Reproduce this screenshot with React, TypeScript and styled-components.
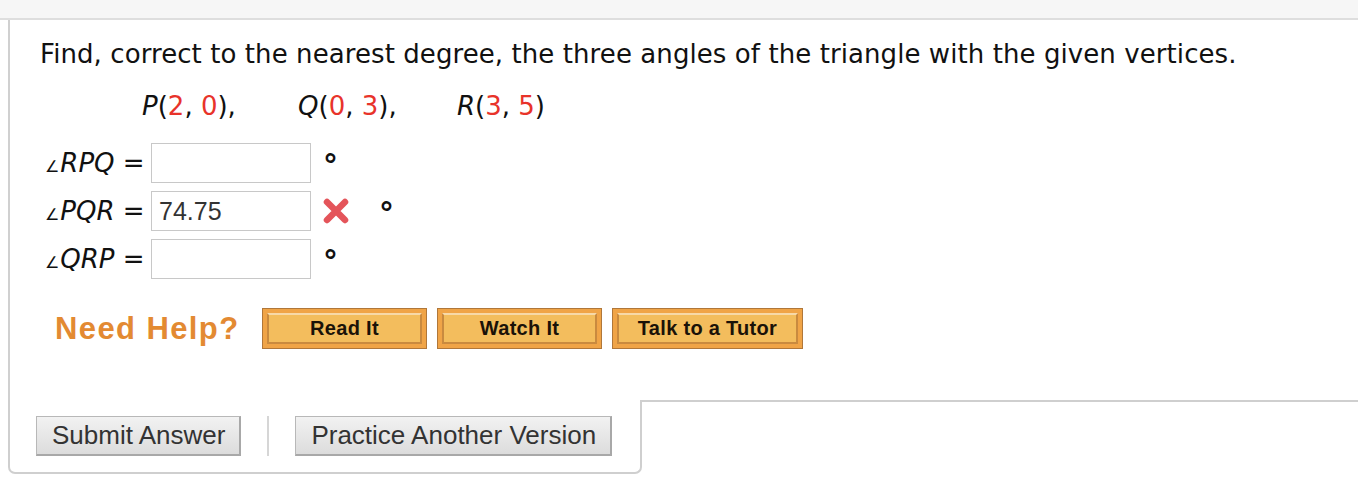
import React from 'react';
import styled, { createGlobalStyle } from 'styled-components';

const GlobalStyle = createGlobalStyle`
  body {
    margin: 0;
    background: #ffffff;
    font-family: "DejaVu Sans", Verdana, sans-serif;
  }
`;

const TopBand = styled.div`
  height: 18px;
  background: #f6f6f6;
  border-bottom: 2px solid #dedede;
`;

const Panel = styled.div`
  margin-left: 8px;
`;

const QuestionBody = styled.div`
  border-left: 2px solid #d0d0d0;
  padding: 19px 0 0 30px;
  height: 380px;
  box-sizing: border-box;
`;

const Prompt = styled.p`
  margin: 0;
  font-size: 26px;
  line-height: 30px;
  letter-spacing: 0.08px;
  color: #111;
`;

const Vertices = styled.div`
  display: grid;
  grid-template-columns: 156px 159px auto;
  margin: 22px 0 0 102px;
  font-size: 26px;
  line-height: 30px;
  color: #111;
`;

const Var = styled.i`
  font-style: italic;
`;

const Num = styled.span`
  color: #e8332a;
`;

const AngleList = styled.div`
  display: flex;
  flex-direction: column;
  gap: 8px;
  margin: 22px 0 0 5px;
`;

const AngleRow = styled.div`
  display: flex;
  align-items: center;
  height: 40px;
`;

const Label = styled.div`
  width: 106px;
  font-size: 26px;
  color: #111;
  white-space: nowrap;
`;

const AngleSign = styled.span`
  font-size: 16px;
  margin-right: 1px;
`;

const Box = styled.div`
  width: 160px;
  height: 40px;
  box-sizing: border-box;
  border: 1px solid #c8c8c8;
  font-family: "Liberation Sans", Arial, sans-serif;
  font-size: 25px;
  line-height: 38px;
  color: #333;
  padding-left: 7px;
`;

const Degree = styled.span<{ $gap: number }>`
  margin-left: ${(p) => p.$gap}px;
  align-self: flex-start;
  margin-top: 8px;
  font-size: 30px;
  font-weight: bold;
  line-height: 30px;
  color: #111;
`;

const WrongMark = styled.svg`
  margin-left: 11px;
  width: 28px;
  height: 28px;
`;

const HelpRow = styled.div`
  display: flex;
  align-items: center;
  gap: 10px;
  margin: 29px 0 0 15px;
`;

const HelpTitle = styled.span`
  width: 197px;
  font-family: "Liberation Sans", Arial, sans-serif;
  font-weight: bold;
  font-size: 31px;
  letter-spacing: 1.4px;
  color: #e38a32;
`;

const HelpButton = styled.div<{ $w: number }>`
  width: ${(p) => p.$w}px;
  height: 41px;
  box-sizing: border-box;
  background: #f0a447;
  border: 1px solid #b0773a;
  padding: 4px;
  display: flex;
`;

const HelpInner = styled.div`
  flex: 1;
  border: 2px solid #c98a3f;
  border-top-color: #f7d9a8;
  background: #f3bd5d;
  display: flex;
  align-items: center;
  justify-content: center;
  font-family: "Liberation Sans", Arial, sans-serif;
  font-weight: bold;
  font-size: 20px;
  letter-spacing: 0.3px;
  color: #1a1208;
`;

const Footer = styled.div`
  display: flex;
  align-items: flex-start;
`;

const ButtonBar = styled.div`
  display: flex;
  align-items: stretch;
  gap: 26px;
  width: 634px;
  box-sizing: border-box;
  padding: 16px 0 16px 26px;
  border: 2px solid #cfcfcf;
  border-top: none;
  border-radius: 0 0 7px 7px;
`;

const Filler = styled.div`
  flex: 1;
  border-top: 2px solid #cfcfcf;
`;

const GrayButton = styled.div`
  height: 40px;
  box-sizing: border-box;
  padding: 0 14px 0 15px;
  display: flex;
  align-items: center;
  background: linear-gradient(#f2f2f2, #dcdcdc);
  border: 1px solid #b8b8b8;
  border-right: 2px solid #a8a8a8;
  border-bottom: 2px solid #a8a8a8;
  font-family: "Liberation Sans", Arial, sans-serif;
  font-size: 26px;
  color: #333;
`;

const Divider = styled.div`
  width: 2px;
  background: #d6d6d6;
`;

function App() {
  const angles = [
    { name: 'RPQ', value: '', wrong: false },
    { name: 'PQR', value: '74.75', wrong: true },
    { name: 'QRP', value: '', wrong: false },
  ];

  return (
    <>
      <GlobalStyle />
      <TopBand />
      <Panel>
        <QuestionBody>
          <Prompt>Find, correct to the nearest degree, the three angles of the triangle with the given vertices.</Prompt>
          <Vertices>
            <span><Var>P</Var>(<Num>2</Num>, <Num>0</Num>),</span>
            <span><Var>Q</Var>(<Num>0</Num>, <Num>3</Num>),</span>
            <span><Var>R</Var>(<Num>3</Num>, <Num>5</Num>)</span>
          </Vertices>
          <AngleList>
            {angles.map((a) => (
              <AngleRow key={a.name}>
                <Label>
                  <AngleSign>∠</AngleSign><Var>{a.name}</Var> =
                </Label>
                <Box>{a.value}</Box>
                {a.wrong && (
                  <WrongMark viewBox="0 0 28 28">
                    <path d="M5 5 L23 23 M23 5 L5 23" stroke="#e4545a" strokeWidth="6.5" strokeLinecap="round" />
                  </WrongMark>
                )}
                <Degree $gap={a.wrong ? 29 : 12}>°</Degree>
              </AngleRow>
            ))}
          </AngleList>
          <HelpRow>
            <HelpTitle>Need Help?</HelpTitle>
            <HelpButton $w={165}><HelpInner>Read It</HelpInner></HelpButton>
            <HelpButton $w={165}><HelpInner>Watch It</HelpInner></HelpButton>
            <HelpButton $w={191}><HelpInner>Talk to a Tutor</HelpInner></HelpButton>
          </HelpRow>
        </QuestionBody>
        <Footer>
          <ButtonBar>
            <GrayButton>Submit Answer</GrayButton>
            <Divider />
            <GrayButton>Practice Another Version</GrayButton>
          </ButtonBar>
          <Filler />
        </Footer>
      </Panel>
    </>
  );
}

export default App;
